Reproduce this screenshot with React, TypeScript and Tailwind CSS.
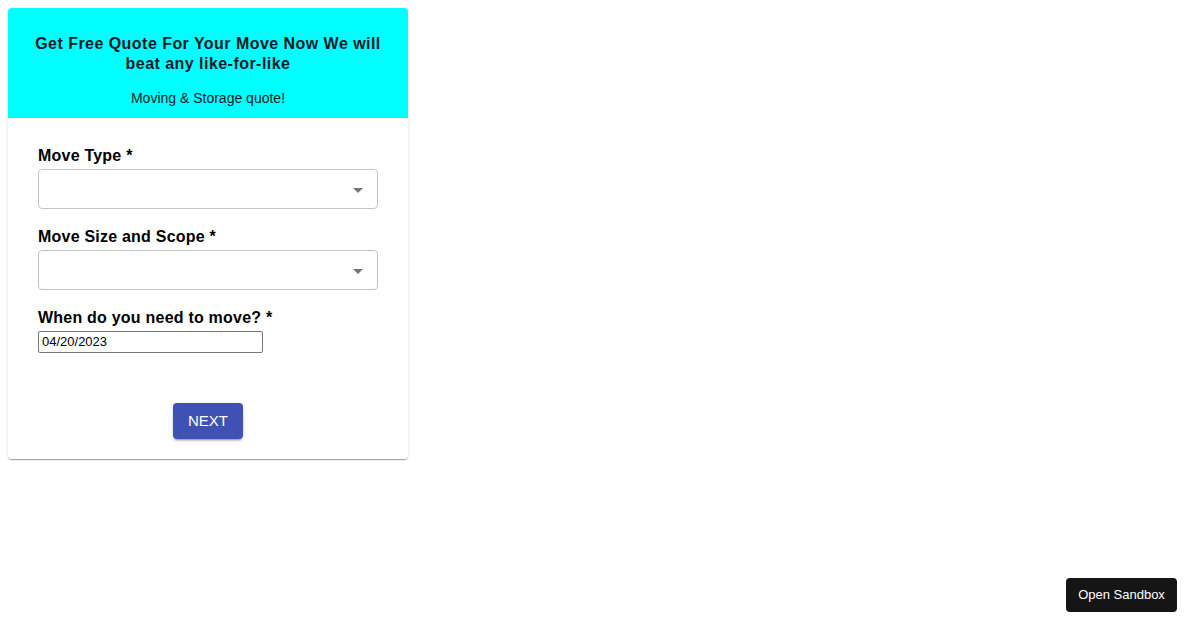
import React from "react";

function Arrow() {
  return (
    <svg width="10" height="5" viewBox="0 0 10 5" className="absolute right-[14px] top-[18px]">
      <path d="M0 0 L10 0 L5 5 Z" fill="#757575" />
    </svg>
  );
}

function SelectBox() {
  return (
    <div className="relative h-[40px] w-[340px] rounded-[4px] border border-[#c4c4c4] bg-white">
      <Arrow />
    </div>
  );
}

export default function App() {
  return (
    <div className="min-h-[630px] w-[1200px] bg-white font-['Liberation_Sans',Arial,sans-serif]">
      <div className="pl-2 pt-2">
        <div className="w-[400px] overflow-hidden rounded-[4px] bg-white shadow-[0_2px_1px_-1px_rgba(0,0,0,0.2),0_1px_1px_0_rgba(0,0,0,0.14),0_1px_3px_0_rgba(0,0,0,0.12)]">
          <div className="bg-[#00ffff] px-5 pb-[12px] pt-[26px] text-center">
            <div className="text-[16px] font-bold leading-[20px] tracking-[0.46px] text-[#111827]">
              Get Free Quote For Your Move Now We will beat any like-for-like
            </div>
            <div className="mt-[16px] text-[14px] leading-[16px] text-[#111827]">
              Moving &amp; Storage quote!
            </div>
          </div>
          <div className="px-[30px] pb-5 pt-[28px]">
            <div className="text-[16px] font-bold leading-[19px] tracking-[0.22px] text-black">Move Type *</div>
            <div className="mt-1">
              <SelectBox />
            </div>
            <div className="mt-[18px] text-[16px] font-bold leading-[19px] tracking-[0.22px] text-black">
              Move Size and Scope *
            </div>
            <div className="mt-1">
              <SelectBox />
            </div>
            <div className="mt-[18px] text-[16px] font-bold leading-[19px] tracking-[0.22px] text-black">
              When do you need to move? *
            </div>
            <div className="mt-1 flex h-[22px] w-[225px] items-center rounded-[2px] border border-[#767676] px-[3px] text-[13px] text-black">
              04/20/2023
            </div>
            <div className="mt-[50px] flex justify-center">
              <button className="h-[36px] w-[70px] rounded-[4px] bg-[#3f51b5] text-[15px] text-white shadow-[0_3px_1px_-2px_rgba(0,0,0,0.2),0_2px_2px_0_rgba(0,0,0,0.14),0_1px_5px_0_rgba(0,0,0,0.12)]">
                NEXT
              </button>
            </div>
          </div>
        </div>
      </div>
      <div className="fixed bottom-[18px] right-[23px] flex h-[34px] w-[111px] items-center justify-center rounded-[4px] bg-[#151515] text-[13px] text-white">
        Open Sandbox
      </div>
    </div>
  );
}
